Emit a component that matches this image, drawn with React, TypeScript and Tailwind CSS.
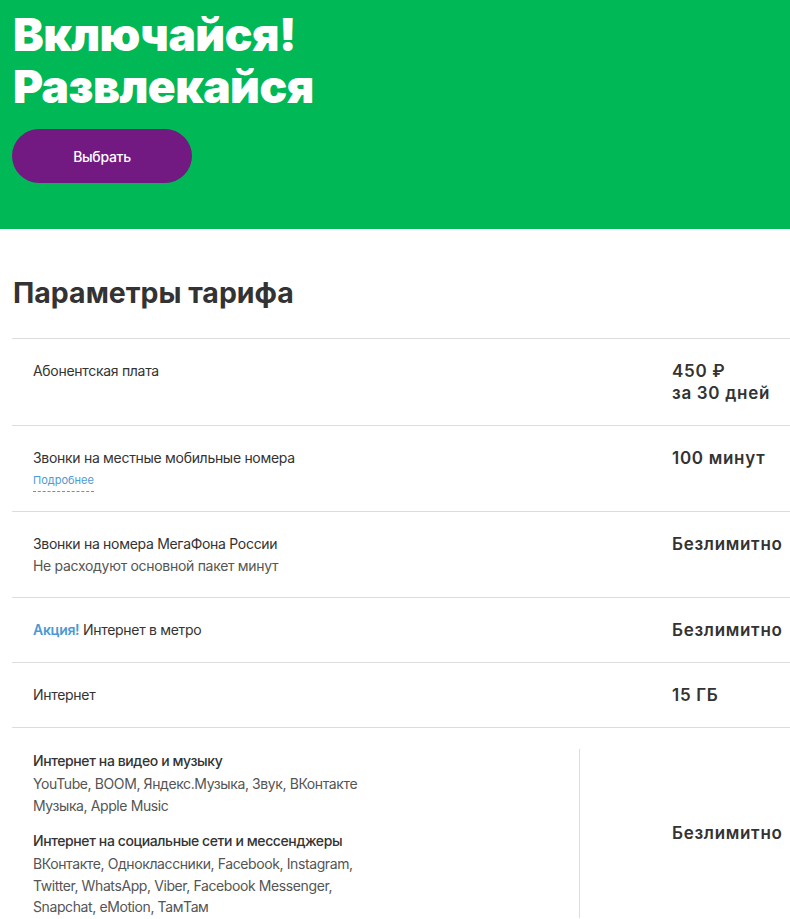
import React from "react";

type Row = {
  label: React.ReactNode;
  sub?: React.ReactNode;
  value: React.ReactNode;
  pb?: string;
};

const rows: Row[] = [
  { label: "Абонентская плата", value: <>450 ₽<br />за 30 дней</> },
  {
    label: "Звонки на местные мобильные номера",
    sub: (
      <a className="mt-[1px] text-[11px] leading-[21px] text-[#4a9ad4] border-b border-dashed border-[#4a9ad4] cursor-pointer">
        Подробнее
      </a>
    ),
    value: "100 минут",
    pb: "pb-[19px]",
  },
  {
    label: "Звонки на номера МегаФона России",
    sub: <span className="text-[14px] leading-[21px] tracking-[-0.3px] text-[#555]">Не расходуют основной пакет минут</span>,
    value: "Безлимитно",
  },
  {
    label: (
      <>
        <span className="text-[#4a9ad4] font-semibold">Акция!</span> Интернет в метро
      </>
    ),
    value: "Безлимитно",
  },
  { label: "Интернет", value: "15 ГБ" },
];

export default function App() {
  return (
    <div className="w-[790px] min-h-[919px] bg-white overflow-hidden font-['Inter',sans-serif] text-[#333]">
      {/* Hero */}
      <section className="bg-[#00b956] h-[229px] pl-[13px] pt-[8px]">
        <h1 className="text-white text-[46px] leading-[52px] font-black tracking-[-0.5px]">
          Включайся!
          <br />
          Развлекайся
        </h1>
        <button className="mt-[17px] -ml-[1px] w-[180px] h-[54px] rounded-full bg-[#731982] text-white text-[14px] font-medium tracking-[-0.3px]">
          Выбрать
        </button>
      </section>

      {/* Tariff params */}
      <section className="pl-[12px]">
        <h2 className="pt-[46px] pb-[27px] pl-[1px] text-[28.5px] leading-[36px] font-bold">Параметры тарифа</h2>

        {rows.map((r, i) => (
          <div key={i} className={`flex border-t border-[#ddd] pt-[21px] ${r.pb ?? "pb-[21px]"}`}>
            <div className="flex-1 pl-[21px] flex flex-col items-start">
              <div className="text-[14px] leading-[22px] tracking-[-0.3px]">{r.label}</div>
              {r.sub}
            </div>
            <div className="w-[118px] text-[17px] leading-[22px] font-semibold tracking-[0.7px]">{r.value}</div>
          </div>
        ))}

        {/* Bundled internet */}
        <div className="flex border-t border-[#ddd] pt-[21px] pb-[21px]">
          <div className="w-[568px] border-r border-[#ddd] pl-[21px] tracking-[-0.4px]">
            <div className="pt-[1px] text-[14px] leading-[22px] font-medium">Интернет на видео и музыку</div>
            <div className="mt-[1px] text-[14px] leading-[21.5px] text-[#555]">
              YouTube, BOOM, Яндекс.Музыка, Звук, ВКонтакте
              <br />
              Музыка, Apple Music
            </div>
            <div className="mt-[14px] text-[14px] leading-[22px] font-medium">
              Интернет на социальные сети и мессенджеры
            </div>
            <div className="mt-[1px] text-[14px] leading-[21.5px] text-[#555]">
              ВКонтакте, Одноклассники, Facebook, Instagram,
              <br />
              Twitter, WhatsApp, Viber, Facebook Messenger,
              <br />
              Snapchat, eMotion, ТамТам
            </div>
          </div>
          <div className="flex-1 flex items-center justify-end">
            <div className="w-[118px] text-[17px] leading-[22px] font-semibold tracking-[0.7px]">Безлимитно</div>
          </div>
        </div>
      </section>
    </div>
  );
}
